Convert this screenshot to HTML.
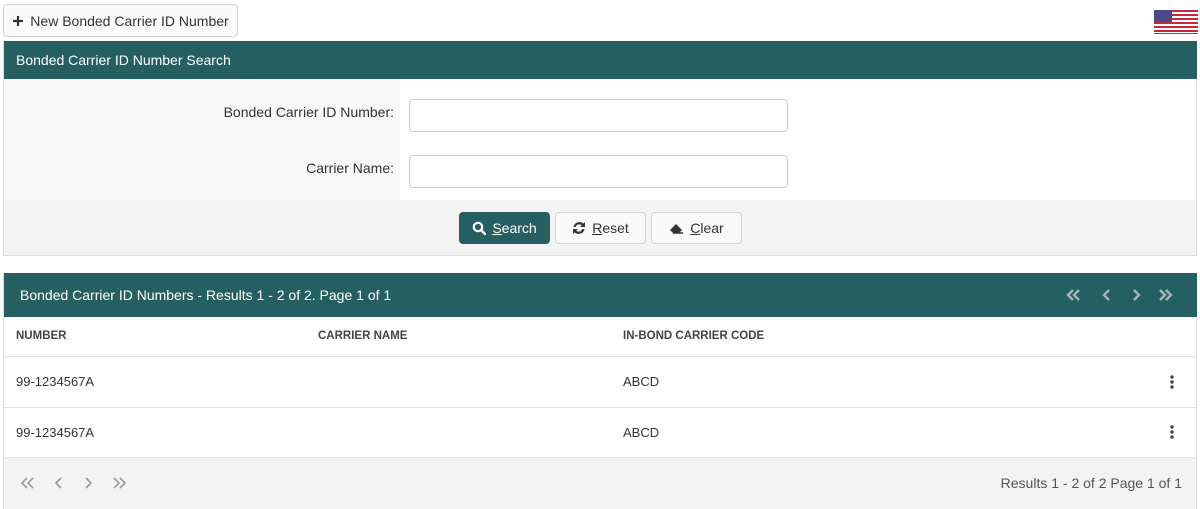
<!DOCTYPE html><html><head><style>
body{margin:0;width:1200px;height:509px;background:#fff;font-family:"Liberation Sans",sans-serif;color:#333;font-size:14px;position:relative;overflow:hidden}
.a{position:absolute}
.btn{position:absolute;border:1px solid #d5d5d5;border-radius:4px;background:#fafafa;box-sizing:border-box;display:flex;align-items:center;justify-content:center;font-size:14px;color:#333}
.btn svg{margin-right:6px}
.hdr{background:#265f62;color:#fff}
input{position:absolute;border:1px solid #ccc;border-radius:4px;height:33px;width:379px;box-sizing:border-box}
.th{font-size:11.5px;font-weight:bold;color:#444}
</style></head><body>
<div class="btn" style="left:3px;top:4px;width:235px;height:33px"><svg width="12" height="12"><path d="M6 1v10M1 6h10" stroke="#333" stroke-width="2.2"/></svg>New Bonded Carrier ID Number</div>
<svg class="a" style="left:1154px;top:10px" width="44" height="24"><rect width="44" height="24" fill="#fff"/><g fill="#c8283c"><rect y="0" width="44" height="2"/><rect y="4" width="44" height="2"/><rect y="8" width="44" height="2"/><rect y="12" width="44" height="2"/><rect y="16" width="44" height="2"/><rect y="20" width="44" height="2"/><rect y="23" width="44" height="1"/></g><rect width="18" height="12" fill="#4a4a8a"/></svg>
<div class="a" style="left:3px;top:41px;width:1194px;height:215px;border:1px solid #ddd;box-sizing:border-box"></div>
<div class="a hdr" style="left:4px;top:41px;width:1193px;height:38px;font-size:14px;line-height:38px;padding-left:12px;box-sizing:border-box">Bonded Carrier ID Number Search</div>
<div class="a" style="left:4px;top:79px;width:396px;height:121px;background:#f8f8f8"></div>
<div class="a" style="left:4px;top:200px;width:1192px;height:55px;background:#f3f3f3"></div>
<div class="a" style="left:0;width:394px;top:104px;text-align:right">Bonded Carrier ID Number:</div>
<div class="a" style="left:0;width:394px;top:160px;text-align:right">Carrier Name:</div>
<input style="left:409px;top:99px"><input style="left:409px;top:155px">
<div class="btn" style="left:459px;top:212px;width:91px;height:32px;background:#265f62;color:#fff;border-color:#265f62"><svg width="14" height="14"><circle cx="6" cy="6" r="4.2" fill="none" stroke="#fff" stroke-width="2.2"/><path d="M9 9l4 4" stroke="#fff" stroke-width="2.6" stroke-linecap="round"/></svg><u>S</u>earch</div>
<div class="btn" style="left:555px;top:212px;width:91px;height:32px"><svg width="14" height="14"><path d="M2.5 6A5 5 0 0 1 11.5 4.5M11.5 8A5 5 0 0 1 2.5 9.5" fill="none" stroke="#333" stroke-width="2.2"/><path d="M13 1v5h-5zM1 13V8h5z" fill="#333"/></svg><u>R</u>eset</div>
<div class="btn" style="left:651px;top:212px;width:91px;height:32px"><svg width="15" height="13"><path d="M1 8l6-6 6 6-3 3H4z" fill="#333"/><path d="M4 11h10" stroke="#333" stroke-width="1.5"/></svg><u>C</u>lear</div>
<div class="a" style="left:3px;top:273px;width:1194px;height:236px;border:1px solid #ddd;box-sizing:border-box"></div>
<div class="a hdr" style="left:4px;top:273px;width:1193px;height:44px;line-height:44px;padding-left:16px;box-sizing:border-box">Bonded Carrier ID Numbers - Results 1 - 2 of 2. Page 1 of 1
<svg class="a" style="left:1062px;top:15px" width="120" height="14" fill="none" stroke="#9fb8b9" stroke-width="2.4"><path d="M7 2l-5 5 5 5M13 2l-5 5 5 5M43 2l-5 5 5 5M68 2l5 5-5 5M94 2l5 5-5 5M100 2l5 5-5 5"/></svg></div>
<div class="a th" style="left:16px;top:330px">NUMBER</div><div class="a th" style="left:318px;top:330px">CARRIER NAME</div><div class="a th" style="left:623px;top:330px">IN-BOND CARRIER CODE</div>
<div class="a" style="left:4px;top:356px;width:1192px;border-top:1px solid #e3e3e3"></div>
<div class="a" style="left:16px;top:374px;font-size:13px">99-1234567A</div><div class="a" style="left:623px;top:374px;font-size:13px">ABCD</div>
<svg class="a" style="left:1169px;top:375px" width="6" height="14" fill="#444"><circle cx="3" cy="2" r="1.7"/><circle cx="3" cy="7" r="1.7"/><circle cx="3" cy="12" r="1.7"/></svg>
<div class="a" style="left:4px;top:407px;width:1192px;border-top:1px solid #e3e3e3"></div>
<div class="a" style="left:16px;top:425px;font-size:13px">99-1234567A</div><div class="a" style="left:623px;top:425px;font-size:13px">ABCD</div>
<svg class="a" style="left:1169px;top:425px" width="6" height="14" fill="#444"><circle cx="3" cy="2" r="1.7"/><circle cx="3" cy="7" r="1.7"/><circle cx="3" cy="12" r="1.7"/></svg>
<div class="a" style="left:4px;top:457px;width:1192px;height:51px;background:#f3f3f3;border-top:1px solid #e3e3e3"></div>
<svg class="a" style="left:20px;top:476px" width="110" height="14" fill="none" stroke="#999" stroke-width="1.6"><path d="M7 2l-5 5 5 5M13 2l-5 5 5 5M41 2l-5 5 5 5M66 2l5 5-5 5M94 2l5 5-5 5M100 2l5 5-5 5"/></svg>
<div class="a" style="right:18px;top:475px;color:#555">Results 1 - 2 of 2 Page 1 of 1</div>
</body></html>
